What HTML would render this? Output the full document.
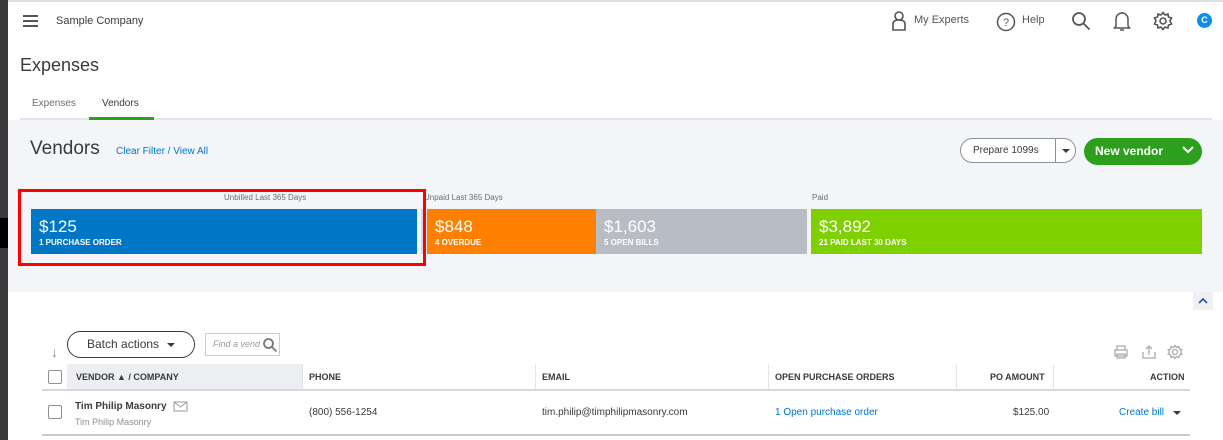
<!DOCTYPE html>
<html><head><style>
*{margin:0;padding:0;box-sizing:border-box}
body{width:1223px;height:440px;overflow:hidden;background:#fff;font-family:"Liberation Sans",sans-serif;position:relative;color:#393a3d}
.a{position:absolute}
.bar{position:absolute;top:209px;height:45px;color:#fff}
.bar .v{position:absolute;left:8px;top:8px;font-size:17px}
.bar .s{position:absolute;left:8px;top:29px;font-size:8px;font-weight:bold}
.lbl{position:absolute;top:193px;font-size:8px;color:#6b6c72}
.th{position:absolute;top:372px;font-size:9px;font-weight:bold;color:#393a3d}
.cb{position:absolute;width:14px;height:14px;border:1px solid #8d9096;background:#fff;border-radius:2px}
</style></head><body>
<div class="a" style="left:0;top:0;width:1223px;height:2px;background:#e0e0e0"></div>
<div class="a" style="left:23px;top:15px;width:15px;height:2px;background:#555;box-shadow:0 5px 0 #555,0 10px 0 #555"></div>
<div class="a" style="left:56px;top:15px;font-size:11px">Sample Company</div>
<svg class="a" style="left:891px;top:11px" width="16" height="20" viewBox="0 0 16 20" fill="none" stroke="#555" stroke-width="1.6"><circle cx="8" cy="5" r="4"/><path d="M2 19v-6q0-4 6-4t6 4v6z"/></svg>
<div class="a" style="left:914px;top:14px;font-size:11px;color:#555">My Experts</div>
<svg class="a" style="left:996px;top:12px" width="20" height="20"><circle cx="10" cy="10" r="8.5" fill="none" stroke="#555" stroke-width="1.5"/><text x="10" y="14" font-size="11" text-anchor="middle" fill="#555" font-family="Liberation Sans">?</text></svg>
<div class="a" style="left:1022px;top:14px;font-size:11px;color:#555">Help</div>
<svg class="a" style="left:1071px;top:11px" width="20" height="20" fill="none" stroke="#555" stroke-width="1.8"><circle cx="8" cy="8" r="6"/><path d="M12.5 12.5l6 6"/></svg>
<svg class="a" style="left:1113px;top:10px" width="18" height="22" fill="none" stroke="#555" stroke-width="1.5"><path d="M3 16V9a6 6 0 0 1 12 0v7l1.5 2h-15z M7 20h4 M9 2v1"/></svg>
<svg class="a" style="left:1153px;top:11px" width="20" height="20" fill="none" stroke="#555" stroke-width="1.6"><circle cx="10" cy="10" r="3"/><path d="M10 1.5l2 2.5 3-1 .5 3 3 1-1.5 3 1.5 3-3 1-.5 3-3-1-2 2.5-2-2.5-3 1-.5-3-3-1 1.5-3-1.5-3 3-1 .5-3 3 1z"/></svg>
<div class="a" style="left:1197px;top:13px;width:15px;height:15px;border-radius:50%;background:#0d8ee8;color:#fff;font-size:9px;font-weight:bold;text-align:center;line-height:15px">C</div>
<div class="a" style="left:20px;top:55px;font-size:18px;color:#393a3d">Expenses</div>
<div class="a" style="left:32px;top:98px;font-size:10px;color:#6b6c72">Expenses</div>
<div class="a" style="left:102px;top:98px;font-size:10px;color:#393a3d">Vendors</div>
<div class="a" style="left:20px;top:118px;width:1192px;height:2px;background:#e3e5e8"></div>
<div class="a" style="left:89px;top:117px;width:65px;height:3px;background:#2ca01c"></div>
<div class="a" style="left:8px;top:120px;width:1215px;height:172px;background:#f4f5f8"></div>
<div class="a" style="left:0;top:0;width:8px;height:440px;background:#3a3a3a"></div>
<div class="a" style="left:0;top:218px;width:8px;height:30px;background:#000"></div>
<div class="a" style="left:30px;top:138px;font-size:19px;color:#393a3d">Vendors</div>
<div class="a" style="left:116px;top:146px;font-size:10px;color:#0077c5">Clear Filter / View All</div>
<div class="a" style="left:960px;top:138px;width:116px;height:25px;border:1px solid #8d9096;border-radius:13px;background:#fff"></div>
<div class="a" style="left:1055px;top:138px;width:1px;height:25px;background:#8d9096"></div>
<div class="a" style="left:973px;top:145px;font-size:10px;color:#393a3d">Prepare 1099s</div>
<div class="a" style="left:1062px;top:149px;border:4px solid transparent;border-top:4px solid #393a3d;border-bottom:0"></div>
<div class="a" style="left:1084px;top:138px;width:118px;height:27px;background:#2ca01c;border-radius:14px"></div>
<div class="a" style="left:1095px;top:144px;font-size:12px;font-weight:bold;color:#fff">New vendor</div>
<svg class="a" style="left:1181px;top:145px" width="14" height="10" fill="none" stroke="#fff" stroke-width="2"><path d="M2 2l5 5 5-5"/></svg>
<div class="lbl" style="left:224px">Unbilled Last 365 Days</div>
<div class="lbl" style="left:424px">Unpaid Last 365 Days</div>
<div class="lbl" style="left:812px">Paid</div>
<div class="bar" style="left:31px;width:386px;background:#0077c5"><div class="v">$125</div><div class="s">1 PURCHASE ORDER</div></div>
<div class="a" style="left:421px;top:209px;width:3px;height:45px;background:#d4d7dc"></div>
<div class="bar" style="left:427px;width:169px;background:#ff8000"><div class="v">$848</div><div class="s">4 OVERDUE</div></div>
<div class="bar" style="left:596px;width:211px;background:#b8bcc4"><div class="v">$1,603</div><div class="s">5 OPEN BILLS</div></div>
<div class="bar" style="left:811px;width:391px;background:#7fd000"><div class="v">$3,892</div><div class="s">21 PAID LAST 30 DAYS</div></div>
<div class="a" style="left:18px;top:189px;width:408px;height:77px;border:3px solid #f00"></div>
<div class="a" style="left:1193px;top:292px;width:20px;height:18px;background:#eef0f3"></div>
<svg class="a" style="left:1197px;top:297px" width="12" height="8" fill="none" stroke="#2d5ba8" stroke-width="1.8"><path d="M2 6l4-4 4 4"/></svg>
<div class="a" style="left:51px;top:344px;font-size:14px;color:#888">↓</div>
<div class="a" style="left:67px;top:331px;width:128px;height:27px;border:1px solid #393a3d;border-radius:14px"></div>
<div class="a" style="left:87px;top:337px;font-size:12px">Batch actions</div>
<div class="a" style="left:167px;top:343px;border:4px solid transparent;border-top:4px solid #393a3d;border-bottom:0"></div>
<div class="a" style="left:205px;top:333px;width:75px;height:23px;border:1px solid #c9ccd1"></div>
<div class="a" style="left:213px;top:339px;font-size:9px;font-style:italic;color:#999">Find a vend</div>
<svg class="a" style="left:262px;top:337px" width="16" height="16" fill="none" stroke="#777" stroke-width="1.8"><circle cx="6.5" cy="6.5" r="4.5"/><path d="M10 10l4.5 4.5"/></svg>
<svg class="a" style="left:1114px;top:344px" width="70" height="16" fill="none" stroke="#aaa" stroke-width="1.3"><path d="M3 6V2h8v4 M1 6h12v6H1z M3 10h8v4H3z"/><path d="M29 8v6h12V8 M35 11V2 M32 5l3-3 3 3"/><circle cx="61" cy="8" r="2.5"/><path d="M61 1.5l1.5 2 2.5-1 .3 2.5 2.5.8-1.3 2.2 1.3 2.2-2.5.8-.3 2.5-2.5-1-1.5 2-1.5-2-2.5 1-.3-2.5-2.5-.8 1.3-2.2-1.3-2.2 2.5-.8.3-2.5 2.5 1z"/></svg>
<div class="a" style="left:67px;top:364px;width:236px;height:26px;background:#eceef1"></div>
<div class="cb" style="left:48px;top:370px"></div>
<div class="a" style="left:302px;top:364px;width:1px;height:26px;background:#e3e5e8"></div>
<div class="a" style="left:535px;top:364px;width:1px;height:26px;background:#e3e5e8"></div>
<div class="a" style="left:768px;top:364px;width:1px;height:26px;background:#e3e5e8"></div>
<div class="a" style="left:956px;top:364px;width:1px;height:26px;background:#e3e5e8"></div>
<div class="a" style="left:1053px;top:364px;width:1px;height:26px;background:#e3e5e8"></div>
<div class="th" style="left:76px">VENDOR ▲ / COMPANY</div>
<div class="th" style="left:309px">PHONE</div>
<div class="th" style="left:542px">EMAIL</div>
<div class="th" style="left:775px">OPEN PURCHASE ORDERS</div>
<div class="th" style="left:990px">PO AMOUNT</div>
<div class="th" style="left:1150px">ACTION</div>
<div class="a" style="left:42px;top:389px;width:1148px;height:2px;background:#d4d7dc"></div>
<div class="cb" style="left:48px;top:405px"></div>
<div class="a" style="left:75px;top:401px;font-size:10px;font-weight:bold;color:#393a3d">Tim Philip Masonry</div>
<svg class="a" style="left:173px;top:401px" width="15" height="11" fill="none" stroke="#999"><rect x="1" y="1" width="13" height="9"/><path d="M1 1l6.5 5 6.5-5"/></svg>
<div class="a" style="left:75px;top:417px;font-size:9px;color:#8d9096">Tim Philip Masonry</div>
<div class="a" style="left:309px;top:407px;font-size:10px">(800) 556-1254</div>
<div class="a" style="left:542px;top:407px;font-size:10px">tim.philip@timphilipmasonry.com</div>
<div class="a" style="left:775px;top:407px;font-size:10px;color:#0077c5">1 Open purchase order</div>
<div class="a" style="left:1013px;top:407px;font-size:10px">$125.00</div>
<div class="a" style="left:1119px;top:407px;font-size:10px;color:#0077c5">Create bill</div>
<div class="a" style="left:1173px;top:411px;border:4px solid transparent;border-top:4px solid #393a3d;border-bottom:0"></div>
<div class="a" style="left:42px;top:434px;width:1148px;height:2px;background:#c9ccd1"></div>
</body></html>
